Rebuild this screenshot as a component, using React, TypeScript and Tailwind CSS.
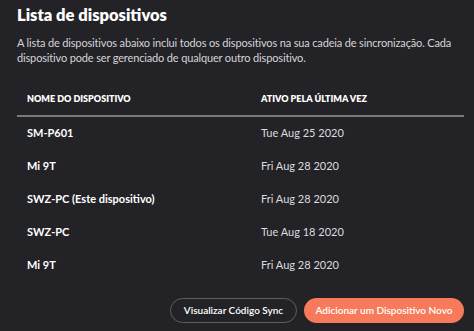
const devices = [
  { name: 'SM-P601', date: 'Tue Aug 25 2020' },
  { name: 'Mi 9T', date: 'Fri Aug 28 2020' },
  { name: 'SWZ-PC (Este dispositivo)', date: 'Fri Aug 28 2020' },
  { name: 'SWZ-PC', date: 'Tue Aug 18 2020' },
  { name: 'Mi 9T', date: 'Fri Aug 28 2020' },
]

export default function App() {
  return (
    <div
      className="w-[474px] h-[331px] overflow-hidden bg-[#232327] text-[#e8e8ea] pl-[17px] pr-[10px] pt-[3px]"
      style={{ fontFamily: 'Lato, "Noto Sans", sans-serif' }}
    >
      <h1 className="text-[16.5px] font-extrabold leading-[24px] text-white">Lista de dispositivos</h1>
      <p className="mt-[8px] -mr-[6px] text-[11px] leading-[15px] tracking-[-0.15px] text-[#d4d4d8]">
        A lista de dispositivos abaixo inclui todos os dispositivos na sua cadeia de sincronização. Cada
        dispositivo pode ser gerenciado de qualquer outro dispositivo.
      </p>

      <div className="mt-[28px]">
        <div className="grid grid-cols-[234px_1fr] pl-[10px] pb-[10px] text-[9px] font-extrabold uppercase leading-[12px] text-white border-b-2 border-[#7a7a7e]">
          <span>Nome do dispositivo</span>
          <span>Ativo pela última vez</span>
        </div>
        <div>
          {devices.map((d, i) => (
            <div key={i} className="grid grid-cols-[234px_1fr] pl-[10px] h-[33px] items-center text-[11px]">
              <span className="font-bold text-white">{d.name}</span>
              <span className="text-[#dcdcdf]">{d.date}</span>
            </div>
          ))}
        </div>
      </div>

      <div className="flex justify-end gap-[7px] mt-[16px]">
        <button className="h-[25px] w-[127px] rounded-full border border-[#5d5d62] text-[10px] font-semibold text-white">
          Visualizar Código Sync
        </button>
        <button className="h-[25px] w-[160px] rounded-full bg-[#f77a5a] text-[10px] font-semibold text-white">
          Adicionar um Dispositivo Novo
        </button>
      </div>
    </div>
  )
}
